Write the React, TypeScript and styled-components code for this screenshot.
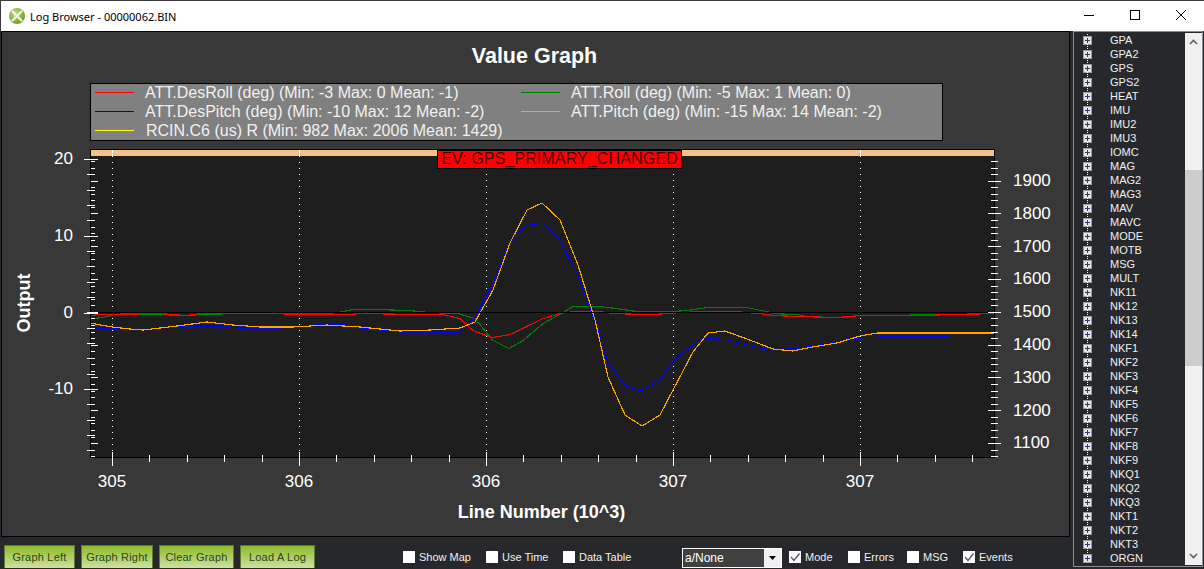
import styled, { createGlobalStyle } from "styled-components";

const GlobalStyle = createGlobalStyle`
  html, body {
    margin: 0;
    padding: 0;
    background: #26282b;
    overflow: hidden;
  }
  * {
    box-sizing: border-box;
  }
`;

type Point = [number, number];

const toPoints = (pts: Point[], dy = 0) => pts.map(([x, y]) => `${x},${y + dy}`).join(" ");

const redLine: Point[] = [
  [91, 315], [98, 314], [160, 313], [187, 315], [200, 313], [280, 313], [293, 314], [347, 314], [360, 313],
  [430, 314], [443, 314], [460, 318], [473, 330], [492, 337], [510, 334], [543, 318], [560, 313], [573, 311],
  [600, 311], [613, 313], [650, 314], [668, 313], [680, 312], [700, 311], [737, 311], [747, 312], [760, 313],
  [773, 315], [803, 316], [837, 317], [847, 316], [860, 315], [920, 315], [950, 314], [995, 313],
];

const greenLine: Point[] = [
  [91, 318], [103, 317], [113, 314], [127, 313], [160, 314], [187, 315], [200, 314], [233, 313], [327, 313],
  [337, 312], [353, 309], [380, 309], [410, 310], [430, 312], [458, 313], [475, 318], [493, 340], [509, 348],
  [523, 340], [543, 323], [563, 312], [573, 306], [600, 306], [617, 308], [637, 311], [670, 311], [687, 310],
  [707, 307], [747, 307], [767, 311], [773, 313], [797, 314], [807, 316], [837, 317], [860, 315], [880, 315],
  [995, 313],
];

const blueLine: Point[] = [
  [91, 329], [120, 329], [143, 330], [177, 326], [227, 326], [237, 328], [280, 328], [317, 325], [347, 325],
  [360, 328], [400, 332], [430, 333], [458, 333], [475, 318], [493, 283], [510, 243], [525, 226], [542, 223],
  [558, 238], [577, 273], [597, 327], [608, 362], [625, 386], [642, 391], [660, 379], [675, 359], [695, 343],
  [708, 338], [728, 340], [760, 348], [773, 350], [800, 348], [827, 344], [860, 338], [880, 337], [950, 337],
];

const orangeLine: Point[] = [
  [91, 323], [100, 325], [112, 327], [130, 329], [143, 330], [177, 326], [207, 322], [233, 325], [260, 327],
  [293, 327], [327, 325], [360, 327], [400, 331], [430, 330], [460, 328], [475, 322], [480, 313], [493, 290],
  [510, 243], [527, 210], [542, 203], [560, 220], [578, 265], [595, 320], [608, 377], [625, 415], [642, 426],
  [660, 415], [673, 390], [693, 352], [708, 333], [725, 331], [747, 339], [773, 349], [793, 351], [813, 347],
  [837, 343], [860, 336], [878, 333], [995, 333],
];

const gridXs = [112, 299, 486, 673, 860];
const xLabels = ["305", "306", "306", "307", "307"];
const leftLabels: [string, number][] = [["20", 158], ["10", 235], ["0", 312], ["-10", 388]];
const rightLabels = [1900, 1800, 1700, 1600, 1500, 1400, 1300, 1200, 1100];

const rightMinor = Array.from({ length: 46 }, (_, i) => 161 + i * 6.56);
const leftOuter = Array.from({ length: 20 }, (_, i) => 159 + i * 15.33);
const bottomTicks = Array.from({ length: 24 }, (_, i) => 112 + i * 37.4);

const legendRows = [
  { x: 95, y: 92, color: "#ff0000", label: "ATT.DesRoll (deg) (Min: -3 Max: 0 Mean: -1)" },
  { x: 95, y: 111, color: "#0000c8", label: "ATT.DesPitch (deg) (Min: -10 Max: 12 Mean: -2)" },
  { x: 95, y: 130, color: "#ffff00", label: "RCIN.C6 (us) R (Min: 982 Max: 2006 Mean: 1429)", shift: 1 },
  { x: 521, y: 92, color: "#008000", label: "ATT.Roll (deg) (Min: -5 Max: 1 Mean: 0)" },
  { x: 521, y: 111, color: "#ffa500", label: "ATT.Pitch (deg) (Min: -15 Max: 14 Mean: -2)" },
];

const treeItems = [
  "GPA", "GPA2", "GPS", "GPS2", "HEAT", "IMU", "IMU2", "IMU3", "IOMC", "MAG", "MAG2", "MAG3", "MAV", "MAVC",
  "MODE", "MOTB", "MSG", "MULT", "NK11", "NK12", "NK13", "NK14", "NKF1", "NKF2", "NKF3", "NKF4", "NKF5", "NKF6",
  "NKF7", "NKF8", "NKF9", "NKQ1", "NKQ2", "NKQ3", "NKT1", "NKT2", "NKT3", "ORGN",
];

function Chart() {
  return (
    <ChartSvg viewBox="2 32 1067 504" width={1067} height={504}>
      <ChartTitle x={534.5} y={63}>Value Graph</ChartTitle>

      <rect x={90.5} y={83.5} width={852} height={57} fill="#808080" stroke="#000" />
      {legendRows.map((row) => (
        <g key={row.label}>
          <line x1={row.x} x2={row.x + 39} y1={row.y + 0.5} y2={row.y + 0.5} stroke={row.color} />
          <LegendText x={row.x + 50 + (row.shift ?? 0)} y={row.y + 5.5}>{row.label}</LegendText>
        </g>
      ))}

      <rect x={90.5} y={150} width={904} height={307.5} fill="#1e1e1e" />
      <rect x={91} y={150} width={903} height={6} fill="#f5c285" />

      {gridXs.map((x) => (
        <line key={x} x1={x + 0.5} x2={x + 0.5} y1={156} y2={457} stroke="#fff" strokeDasharray="1 5" />
      ))}
      {gridXs.map((x) => (
        <line key={x} x1={x + 0.5} x2={x + 0.5} y1={150} y2={156} stroke="#fff" />
      ))}

      <g fill="none" strokeWidth={1.15} shapeRendering="crispEdges">
        <polyline points={toPoints(greenLine, 0.6)} stroke="#008000" />
        <polyline points={toPoints(redLine, 0.6)} stroke="#ff0000" />
        <polyline points={toPoints(blueLine)} stroke="#0000ff" />
        <polyline points={toPoints(orangeLine)} stroke="#ffa500" />
      </g>
      <line x1={91} x2={994} y1={312.5} y2={312.5} stroke="#000" />

      <rect x={90.5} y={149.5} width={904} height={308} fill="none" stroke="#000" />

      {leftOuter.map((y) => (
        <line key={y} x1={87} x2={95} y1={Math.round(y) + 0.5} y2={Math.round(y) + 0.5} stroke="#fff" />
      ))}
      {leftLabels.map(([, y]) => (
        <line key={y} x1={84} x2={98} y1={y + 1.5} y2={y + 1.5} stroke="#fff" />
      ))}
      {rightMinor.map((y, i) => {
        const major = (i + 2) % 5 === 0;
        const py = Math.round(y) + 0.5;
        return (
          <g key={y}>
            <line x1={91} x2={major ? 98 : 95} y1={py} y2={py} stroke="#fff" />
            <line x1={major ? 988 : 991} x2={major ? 1001 : 998} y1={py} y2={py} stroke="#fff" />
          </g>
        );
      })}

      {bottomTicks.map((x, i) => {
        const major = i % 5 === 0;
        const px = Math.round(x) + 0.5;
        return <line key={x} x1={px} x2={px} y1={major ? 452 : 455} y2={major ? 466 : 462} stroke="#fff" />;
      })}

      {leftLabels.map(([label, y]) => (
        <LeftTick key={label} x={73} y={y + 6}>{label}</LeftTick>
      ))}
      {rightLabels.map((label, i) => (
        <TickLabel key={label} x={1013} y={186 + i * 32.8}>{label}</TickLabel>
      ))}
      {xLabels.map((label, i) => (
        <CenterTick key={i} x={gridXs[i]} y={487}>{label}</CenterTick>
      ))}

      <AxisTitle x={541.5} y={518}>Line Number (10^3)</AxisTitle>
      <AxisTitle transform="translate(30 303) rotate(-90)">Output</AxisTitle>

      <rect x={437.5} y={150.5} width={244} height={18} fill="#ff0000" stroke="#000" />
      <EventText x={559.5} y={164}>EV: GPS_PRIMARY_CHANGED</EventText>
    </ChartSvg>
  );
}

function CheckItem({ label, width, checked }: { label: string; width: number; checked?: boolean }) {
  return (
    <CheckLabel $width={width}>
      <Box>
        {checked && (
          <svg width="12" height="12" viewBox="0 0 12 12">
            <path d="M2 6 L5 9.5 L10.5 2.5" fill="none" stroke="#555" strokeWidth="1.3" />
          </svg>
        )}
      </Box>
      {label}
    </CheckLabel>
  );
}

function App() {
  return (
    <Window>
      <GlobalStyle />
      <TitleBar>
        <svg width="18" height="18" viewBox="0 0 18 18">
          <defs>
            <radialGradient id="logo" cx="40%" cy="35%" r="70%">
              <stop offset="0%" stopColor="#c5dc7c" />
              <stop offset="100%" stopColor="#6a9a1c" />
            </radialGradient>
          </defs>
          <circle cx="9" cy="9" r="8" fill="url(#logo)" />
          <path d="M4.5 4.5 L13.5 13.5 M13.5 4.5 L4.5 13.5" stroke="#f4f6ee" strokeWidth="2.2" strokeLinecap="round" />
        </svg>
        <WindowTitle>Log Browser - 00000062.BIN</WindowTitle>
        <WindowControls>
          <ControlButton>
            <svg width="12" height="12" viewBox="0 0 12 12">
              <path d="M1 6.5 H11" stroke="#000" />
            </svg>
          </ControlButton>
          <ControlButton>
            <svg width="12" height="12" viewBox="0 0 12 12">
              <rect x="1.5" y="1.5" width="9" height="9" fill="none" stroke="#000" />
            </svg>
          </ControlButton>
          <ControlButton>
            <svg width="12" height="12" viewBox="0 0 12 12">
              <path d="M1 1 L11 11 M11 1 L1 11" stroke="#000" />
            </svg>
          </ControlButton>
        </WindowControls>
      </TitleBar>

      <Body>
        <MainColumn>
          <GraphPanel>
            <Chart />
          </GraphPanel>
          <BottomBar>
            <ButtonGroup>
              <GreenButton $width={71}>Graph Left</GreenButton>
              <GreenButton $width={72}>Graph Right</GreenButton>
              <GreenButton $width={75}>Clear Graph</GreenButton>
              <GreenButton $width={75}>Load A Log</GreenButton>
            </ButtonGroup>
            <CheckGroup $left={88}>
              <CheckItem label="Show Map" width={83} />
              <CheckItem label="Use Time" width={77} />
              <CheckItem label="Data Table" width={71} />
            </CheckGroup>
            <Combo>
              <ComboValue>a/None</ComboValue>
              <ComboArrow>
                <svg width="7" height="4" viewBox="0 0 7 4">
                  <path d="M0 0 H7 L3.5 4 Z" fill="#000" />
                </svg>
              </ComboArrow>
            </Combo>
            <CheckGroup $left={7}>
              <CheckItem label="Mode" width={59} checked />
              <CheckItem label="Errors" width={59} />
              <CheckItem label="MSG" width={56} />
              <CheckItem label="Events" width={50} checked />
            </CheckGroup>
          </BottomBar>
        </MainColumn>

        <TreePanel>
          <TreeList>
            {treeItems.map((item) => (
              <TreeRow key={item}>
                <Expander>
                  <svg width="5" height="5" viewBox="0 0 5 5">
                    <path d="M0 2.5 H5 M2.5 0 V5" stroke="#2b3a80" />
                  </svg>
                </Expander>
                <TreeLabel>{item}</TreeLabel>
              </TreeRow>
            ))}
          </TreeList>
          <Scrollbar>
            <ScrollArrow>
              <svg width="9" height="6" viewBox="0 0 9 6">
                <path d="M1 5 L4.5 1.5 L8 5" fill="none" stroke="#606060" strokeWidth="1.6" />
              </svg>
            </ScrollArrow>
            <ScrollTrack $height={120} />
            <ScrollThumb />
            <ScrollTrack $height={181} />
            <ScrollArrow>
              <svg width="9" height="6" viewBox="0 0 9 6">
                <path d="M1 1 L4.5 4.5 L8 1" fill="none" stroke="#606060" strokeWidth="1.6" />
              </svg>
            </ScrollArrow>
          </Scrollbar>
        </TreePanel>
      </Body>
    </Window>
  );
}

export default App;

const Window = styled.div`
  width: 1204px;
  height: 569px;
  display: flex;
  flex-direction: column;
  background: #26282b;
  font-family: "Liberation Sans", Arial, sans-serif;
  overflow: hidden;
`;

const TitleBar = styled.div`
  height: 31px;
  flex: none;
  display: flex;
  align-items: center;
  padding-left: 7px;
  background: #fff;
  border-top: 1px solid #3a3a3a;
  border-left: 1px solid #3a3a3a;
`;

const WindowTitle = styled.span`
  margin-left: 4px;
  font-family: "Noto Sans", sans-serif;
  font-size: 11px;
  color: #000;
`;

const WindowControls = styled.div`
  margin-left: auto;
  display: flex;
`;

const ControlButton = styled.div`
  width: 46px;
  height: 30px;
  padding-bottom: 2px;
  display: flex;
  align-items: center;
  justify-content: center;
`;

const Body = styled.div`
  flex: 1;
  display: flex;
  min-height: 0;
`;

const MainColumn = styled.div`
  width: 1073px;
  display: flex;
  flex-direction: column;
`;

const GraphPanel = styled.div`
  width: 1069px;
  height: 506px;
  margin-left: 1px;
  background: #383838;
  border: 1px solid #000;
`;

const ChartSvg = styled.svg`
  display: block;
  font-family: "Liberation Sans", Arial, sans-serif;
`;

const ChartTitle = styled.text`
  font-size: 21.5px;
  font-weight: bold;
  fill: #fff;
  text-anchor: middle;
`;

const LegendText = styled.text`
  font-size: 16px;
  fill: #f0f0f0;
`;

const TickLabel = styled.text`
  font-size: 17px;
  fill: #fff;
`;

const LeftTick = styled(TickLabel)`
  text-anchor: end;
`;

const CenterTick = styled(TickLabel)`
  text-anchor: middle;
`;

const AxisTitle = styled.text`
  font-size: 18px;
  font-weight: bold;
  fill: #fff;
  text-anchor: middle;
`;

const EventText = styled.text`
  font-size: 16.2px;
  fill: #500000;
  text-anchor: middle;
`;

const BottomBar = styled.div`
  flex: 1;
  display: flex;
  align-items: center;
  padding: 8px 0 2px 4px;
`;

const ButtonGroup = styled.div`
  display: flex;
  gap: 6px;
`;

const GreenButton = styled.div<{ $width: number }>`
  width: ${(p) => p.$width}px;
  height: 23px;
  display: flex;
  align-items: center;
  justify-content: center;
  font-size: 11px;
  letter-spacing: 0.2px;
  color: #2d4712;
  background: linear-gradient(#8bbb27, #cfe0a2);
  border: 1px solid #5d7d35;
  border-bottom: none;
`;

const CheckGroup = styled.div<{ $left: number }>`
  display: flex;
  align-items: center;
  margin-left: ${(p) => p.$left}px;
`;

const CheckLabel = styled.label<{ $width: number }>`
  width: ${(p) => p.$width}px;
  display: flex;
  align-items: center;
  gap: 4px;
  font-size: 11px;
  color: #f0f0f0;
`;

const Box = styled.span`
  width: 12px;
  height: 12px;
  display: block;
  margin-top: 1px;
  background: #fff;
  line-height: 0;
`;

const Combo = styled.div`
  width: 100px;
  height: 20px;
  margin: 2px 0 0 48px;
  display: flex;
  background: #404040;
  border: 1px solid #fff;
`;

const ComboValue = styled.div`
  flex: 1;
  padding-left: 2px;
  font-size: 12px;
  line-height: 18px;
  color: #fff;
`;

const ComboArrow = styled.div`
  width: 17px;
  display: flex;
  align-items: center;
  justify-content: center;
  background: #f0f0f0;
`;

const TreePanel = styled.div`
  width: 130px;
  height: 536px;
  padding: 1px 0 1px 0;
  display: flex;
  background: #26282b;
  border: 1px solid #8a8d92;
`;

const TreeList = styled.div`
  flex: 1;
  overflow: hidden;
`;

const TreeRow = styled.div`
  position: relative;
  height: 14px;
  display: flex;
  align-items: center;
  padding-left: 9px;

  &::before {
    content: "";
    position: absolute;
    left: 13px;
    top: -3px;
    height: 5px;
    border-left: 1px dotted #fff;
  }
`;

const Expander = styled.span`
  width: 9px;
  height: 9px;
  display: flex;
  align-items: center;
  justify-content: center;
  background: #e4e4e4;
  border: 1px solid #9a9a9a;
  line-height: 0;
`;

const TreeLabel = styled.span`
  margin-left: 18px;
  font-size: 11px;
  color: #f0f0f0;
`;

const Scrollbar = styled.div`
  width: 17px;
  display: flex;
  flex-direction: column;
  background: #f0f0f0;
`;

const ScrollArrow = styled.div`
  height: 17px;
  flex: none;
  display: flex;
  align-items: center;
  justify-content: center;
`;

const ScrollTrack = styled.div<{ $height: number }>`
  flex: none;
  height: ${(p) => p.$height}px;
`;

const ScrollThumb = styled.div`
  flex: none;
  height: 196px;
  background: #cdcdcd;
`;
